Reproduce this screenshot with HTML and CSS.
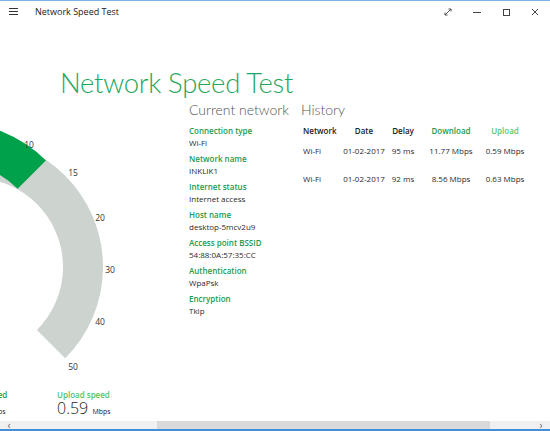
FILE: index.html
```html
<!DOCTYPE html>
<html>
<head>
	<title>Network Speed Test</title>
	<meta charset="utf-8">
	<link rel="stylesheet" href="styles.css">
</head>
<body>
	<section id="window">
		<header class="titlebar">
			<svg class="hamburger" width="10" height="8" viewBox="0 0 10 8">
				<path d="M0 0.5H9M0 3.5H9M0 6.5H9" stroke="#333" stroke-width="1" fill="none"/>
			</svg>
			<span class="apptitle">Network Speed Test</span>
			<div class="winbuttons">
				<svg width="8" height="8" viewBox="0 0 8 8">
					<path d="M1 7L7 1M1 4.5V7H3.5M7 3.5V1H4.5" stroke="#444" stroke-width="0.9" fill="none"/>
				</svg>
				<svg width="8" height="8" viewBox="0 0 8 8">
					<path d="M0 4.5H8" stroke="#444" stroke-width="1" fill="none"/>
				</svg>
				<svg width="8" height="8" viewBox="0 0 8 8">
					<rect x="1.5" y="1.5" width="6" height="6" stroke="#444" stroke-width="1" fill="none"/>
				</svg>
				<svg width="8" height="8" viewBox="0 0 8 8">
					<path d="M1 1L7 7M7 1L1 7" stroke="#444" stroke-width="1" fill="none"/>
				</svg>
			</div>
		</header>

		<section class="app">
			<div class="content">
				<h1 class="apphead">Network Speed Test</h1>

				<div class="columns">
					<div class="gaugecol">
						<svg class="gauge" width="300" height="285" viewBox="0 0 300 285">
							<path d="M66.93 243.07 A109 109 0 1 1 221.07 243.07" stroke="#cdd3cf" stroke-width="40" fill="none"/>
							<path d="M66.93 243.07 A109 109 0 1 1 201.76 73.57" stroke="#00a14b" stroke-width="40" fill="none"/>
							<g class="ticks">
								<text x="199" y="43">10</text>
								<text x="243" y="71">15</text>
								<text x="270" y="116">20</text>
								<text x="280" y="168">30</text>
								<text x="270" y="220">40</text>
								<text x="243" y="265">50</text>
							</g>
						</svg>
						<div class="speeds">
							<div class="speed">
								<p class="speedlabel down">Download speed</p>
								<p class="speedvalue">11.77 <span>Mbps</span></p>
							</div>
							<div class="speed">
								<p class="speedlabel up">Upload speed</p>
								<p class="speedvalue">0.59 <span>Mbps</span></p>
							</div>
						</div>
					</div>

					<div class="netcol">
						<h2>Current network</h2>
						<dl class="netinfo">
							<dt>Connection type</dt><dd>Wi-Fi</dd>
							<dt>Network name</dt><dd>INKLIK1</dd>
							<dt>Internet status</dt><dd>Internet access</dd>
							<dt>Host name</dt><dd>desktop-5mcv2u9</dd>
							<dt>Access point BSSID</dt><dd>54:88:0A:57:35:CC</dd>
							<dt>Authentication</dt><dd>WpaPsk</dd>
							<dt>Encryption</dt><dd>Tkip</dd>
						</dl>
					</div>

					<div class="histcol">
						<h2>History</h2>
						<div class="history">
							<span class="th">Network</span>
							<span class="th">Date</span>
							<span class="th">Delay</span>
							<span class="th down">Download</span>
							<span class="th up">Upload</span>

							<span>Wi-Fi</span>
							<span>01-02-2017</span>
							<span>95 ms</span>
							<span>11.77 Mbps</span>
							<span>0.59 Mbps</span>

							<span>Wi-Fi</span>
							<span>01-02-2017</span>
							<span>92 ms</span>
							<span>8.56 Mbps</span>
							<span>0.63 Mbps</span>
						</div>
					</div>
				</div>
			</div>
		</section>

		<footer class="hscroll">
			<span class="arrow">&lsaquo;</span>
			<div class="track"><div class="thumb"></div></div>
			<span class="arrow">&rsaquo;</span>
		</footer>
	</section>
</body>
</html>
```

FILE: styles.css
```css
html, body {
	height: 100%;
	margin: 0;
	padding: 0;
}

body {
	font-family: "Open Sans", "Liberation Sans", sans-serif;
	color: #333;
	background: white;
}

p, h1, h2, dl, dd {
	margin: 0;
	padding: 0;
}

#window {
	display: flex;
	flex-direction: column;
	height: 431px;
	box-sizing: border-box;
	border-top: 1px solid #7fb3e6;
	border-bottom: 2px solid #3f8fdc;
	overflow: hidden;
}

/* title bar */
.titlebar {
	display: flex;
	align-items: center;
	height: 21px;
	flex: none;
}

.hamburger {
	margin: 0 0 0 9px;
}

.apptitle {
	margin-left: 16px;
	font-size: 9px;
	color: #222;
}

.winbuttons {
	margin-left: auto;
	display: flex;
	align-items: center;
	gap: 21px;
	padding-right: 11px;
}

/* scrolled app area */
.app {
	flex: 1;
	overflow: hidden;
}

.content {
	margin-left: -170px;
	width: 900px;
}

.apphead {
	margin: 43px 0 0 230px;
	font-family: Lato, "Open Sans", sans-serif;
	font-size: 27.5px;
	letter-spacing: -0.3px;
	line-height: 36px;
	font-weight: 300;
	color: #1fa75b;
}

.columns {
	display: flex;
	gap: 59px;
}
.columns > div {
	flex: none;
	min-width: 0;
}

.gaugecol {
	width: 300px;
}

.gauge {
	display: block;
}

.ticks text {
	font-size: 8.5px;
	fill: #333;
	text-anchor: middle;
	dominant-baseline: central;
}

.speeds {
	display: flex;
	padding: 3px 0 0 113px;
}

.speed {
	flex: none;
	width: 114px;
}

.speedlabel {
	font-size: 8px;
	font-weight: 600;
	line-height: 11px;
	white-space: nowrap;
}
.speedlabel.down { color: #1a9c4f; }
.speedlabel.up { color: #4cc56a; }

.speedvalue {
	font-size: 16px;
	font-weight: 300;
	line-height: 16px;
	color: #222;
	white-space: nowrap;
}
.speedvalue span {
	font-size: 7px;
	font-weight: normal;
}

h2 {
	font-family: Lato, "Open Sans", sans-serif;
	font-size: 14px;
	font-weight: 300;
	line-height: 18px;
	color: #555;
	white-space: nowrap;
}

.netcol {
	width: 53px;
}

.netinfo {
	margin-top: 6px;
	font-size: 8px;
	line-height: 12px;
	white-space: nowrap;
}

.netinfo dt {
	font-weight: 600;
	color: #1a9c4f;
}

.netinfo dd {
	margin-bottom: 4px;
	color: #2a2a2a;
}

.history {
	display: grid;
	grid-template-columns: 40px 42px 36px 60px 48px;
	row-gap: 8px;
	margin: 6px 0 0 2px;
	font-size: 8px;
	line-height: 12px;
	text-align: center;
	white-space: nowrap;
	color: #2a2a2a;
}

.history span:nth-child(5n+1) {
	text-align: left;
}

.history span:nth-child(n+6):nth-child(-n+10) {
	margin-bottom: 8px;
}

.th {
	font-weight: 600;
	color: #222;
}
.th.down { color: #1a9c4f; }
.th.up { color: #56c96f; }

/* horizontal scrollbar */
.hscroll {
	display: flex;
	align-items: center;
	height: 8px;
	flex: none;
	background: #f0f0f0;
}

.arrow {
	width: 18px;
	text-align: center;
	font-size: 10px;
	line-height: 8px;
	color: #666;
}

.track {
	flex: 1;
	height: 8px;
}

.thumb {
	margin-left: 139px;
	width: 333px;
	height: 8px;
	background: #d9d9d9;
}
```
